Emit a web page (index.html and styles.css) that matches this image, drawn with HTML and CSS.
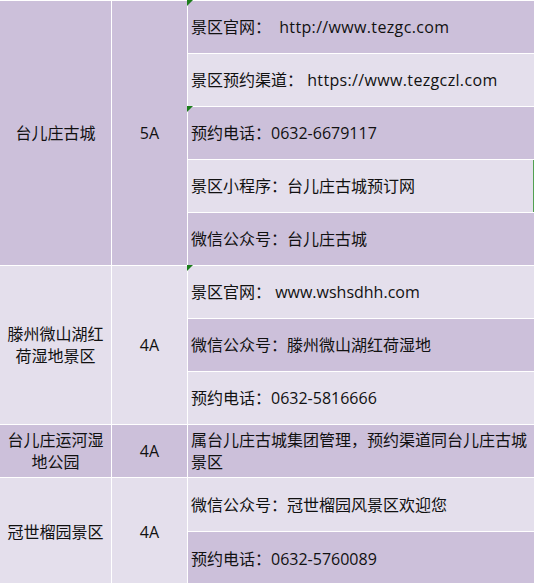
FILE: index.html
```html
<!DOCTYPE html>
<html lang="zh-CN">
<head>
<meta charset="utf-8">
<title>景区预约信息</title>
<link rel="stylesheet" href="styles.css">
</head>
<body>
<div class="sheet">
  <div class="cell name dark span5">台儿庄古城</div>
  <div class="cell level dark span5">5A</div>
  <div class="cell info dark flag">景区官网： <span class="url first">http://www.tezgc.com</span></div>
  <div class="cell info light">景区预约渠道： <span class="url">https://www.tezgczl.com</span></div>
  <div class="cell info dark flag">预约电话：0632-6679117</div>
  <div class="cell info light selected">景区小程序：台儿庄古城预订网</div>
  <div class="cell info dark">微信公众号：台儿庄古城</div>

  <div class="cell name light span3">滕州微山湖红荷湿地景区</div>
  <div class="cell level light span3">4A</div>
  <div class="cell info light flag">景区官网： www.wshsdhh.com</div>
  <div class="cell info dark">微信公众号：滕州微山湖红荷湿地</div>
  <div class="cell info light">预约电话：0632-5816666</div>

  <div class="cell name dark">台儿庄运河湿地公园</div>
  <div class="cell level dark">4A</div>
  <div class="cell info dark">属台儿庄古城集团管理，预约渠道同台儿庄古城景区</div>

  <div class="cell name light span2">冠世榴园景区</div>
  <div class="cell level light span2">4A</div>
  <div class="cell info light">微信公众号：冠世榴园风景区欢迎您</div>
  <div class="cell info dark">预约电话：0632-5760089</div>
</div>
</body>
</html>
```

FILE: styles.css
```css
html, body {
  margin: 0;
  padding: 0;
  background: #ffffff;
}

body {
  font-family: "Open Sans", "Noto Sans CJK SC", sans-serif;
  font-size: 16px;
  color: #111111;
}

.sheet {
  display: grid;
  grid-template-columns: 111px 75px 1fr;
  grid-template-rows: repeat(9, 52px) 53px 53px;
  gap: 1px;
  padding-top: 1px;
  background: #ffffff;
  width: 534px;
}

.cell {
  position: relative;
  display: flex;
  align-items: center;
  line-height: 22px;
  box-sizing: border-box;
}

.dark { background: #ccc0da; }
.light { background: #e4dfec; }

.span5 { grid-row: span 5; }
.span3 { grid-row: span 3; }
.span2 { grid-row: span 2; }

.name,
.level {
  justify-content: center;
  text-align: center;
  padding: 0 4px;
}

.info {
  display: block;
  padding: 0 2px 0 3px;
  align-content: center;
}

.url {
  letter-spacing: 0.35px;
}

.url.first {
  margin-left: 4px;
}

.flag::before {
  content: "";
  position: absolute;
  left: -1px;
  top: -1px;
  width: 0;
  height: 0;
  border-style: solid;
  border-width: 6px 6px 0 0;
  border-color: #1b7d1b transparent transparent transparent;
}

.selected {
  box-shadow: inset -1px 0 0 #52a052;
}
```
